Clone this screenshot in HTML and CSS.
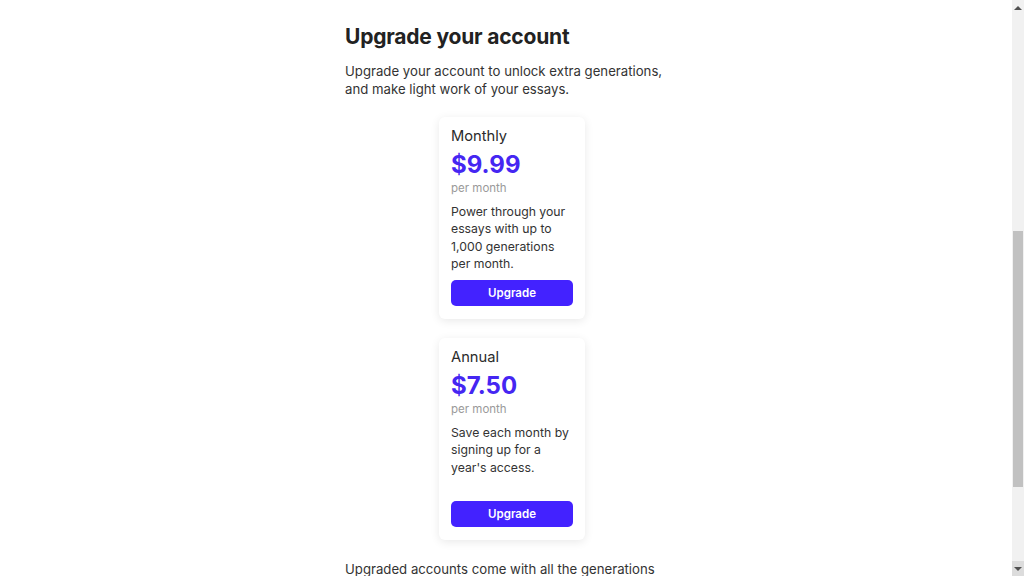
FILE: index.html
```html
<!DOCTYPE html>
<html lang="en">
<head>
<meta charset="utf-8">
<title>Upgrade your account</title>
<link rel="stylesheet" href="styles.css">
</head>
<body>
<main class="page">
  <h1 class="title">Upgrade your account</h1>
  <p class="lead">Upgrade your account to unlock extra generations, and make light work of your essays.</p>
  <div class="plans">
    <section class="plan">
      <h2 class="plan-name">Monthly</h2>
      <div class="plan-price">$9.99</div>
      <div class="plan-period">per month</div>
      <p class="plan-desc">Power through your essays with up to 1,000 generations per month.</p>
      <button class="plan-btn">Upgrade</button>
    </section>
    <section class="plan">
      <h2 class="plan-name">Annual</h2>
      <div class="plan-price">$7.50</div>
      <div class="plan-period">per month</div>
      <p class="plan-desc">Save each month by signing up for a year's access.</p>
      <button class="plan-btn">Upgrade</button>
    </section>
  </div>
  <p class="lead foot">Upgraded accounts come with all the generations you need to write, rewrite and polish your essays, plus priority support.</p>
  <p class="lead foot">You can cancel your subscription at any time from your account settings.</p>
</main>
<div class="scrollbar" aria-hidden="true">
  <div class="sb-btn sb-up"><span class="arrow-up"></span></div>
  <div class="sb-track"><div class="sb-thumb"></div></div>
  <div class="sb-btn sb-down"><span class="arrow-down"></span></div>
</div>
</body>
</html>
```
FILE: styles.css
```css
html, body {
  margin: 0;
  padding: 0;
  background: #ffffff;
}
html {
  scrollbar-width: none;
}
body {
  font-family: Inter, "Noto Sans", sans-serif;
  color: #2b2b2b;
  padding-right: 12px;
}
.page {
  width: 334px;
  margin: 0 auto;
  padding: 23px 0 200px 12px;
}
.title {
  margin: 0;
  font-size: 21px;
  font-weight: 700;
  line-height: 28px;
  color: #222;
  letter-spacing: -0.2px;
}
.lead {
  margin: 11px 0 0;
  font-size: 13.2px;
  line-height: 18px;
  color: #333;
}
.plans {
  display: grid;
  grid-template-columns: 146px;
  grid-auto-rows: 1fr;
  justify-content: center;
  row-gap: 19px;
  margin-top: 19px;
}
.plan {
  display: flex;
  flex-direction: column;
  background: #fff;
  border-radius: 6px;
  box-shadow: 0 2px 10px rgba(0, 0, 0, 0.09);
  padding: 9px 12px 13px;
}
.plan-name {
  margin: 0;
  font-size: 14.7px;
  font-weight: 400;
  line-height: 20px;
  color: #2b2b2b;
}
.plan-price {
  margin-top: 4px;
  font-size: 24px;
  font-weight: 700;
  line-height: 29px;
  color: #4526f2;
}
.plan-period {
  margin-top: 1px;
  font-size: 11.5px;
  line-height: 16px;
  color: #9a9a9a;
}
.plan-desc {
  margin: 7px 0 0;
  font-size: 12.25px;
  line-height: 17.3px;
  color: #333;
  flex: 1;
}
.plan-btn {
  margin-top: 8px;
  height: 26px;
  border: 0;
  border-radius: 5px;
  background: #4322ff;
  color: #fff;
  font-family: inherit;
  font-size: 11.5px;
  font-weight: 600;
  cursor: pointer;
}
.foot {
  margin-top: 20px;
}
.foot + .foot {
  margin-top: 12px;
}
.scrollbar {
  position: fixed;
  top: 0;
  right: 0;
  bottom: 0;
  width: 12px;
  display: flex;
  flex-direction: column;
  background: #f1f1f1;
}
.sb-btn {
  height: 15px;
  display: flex;
  align-items: center;
  justify-content: center;
}
.sb-down {
  background: #dcdcdc;
}
.sb-track {
  flex: 1;
  padding-top: 216px;
}
.sb-thumb {
  margin: 0 1px;
  height: 256px;
  background: #c1c1c1;
}
.arrow-up {
  width: 0;
  height: 0;
  border-left: 4px solid transparent;
  border-right: 4px solid transparent;
  border-bottom: 4px solid #505050;
}
.arrow-down {
  width: 0;
  height: 0;
  border-left: 4px solid transparent;
  border-right: 4px solid transparent;
  border-top: 4px solid #505050;
}
```
